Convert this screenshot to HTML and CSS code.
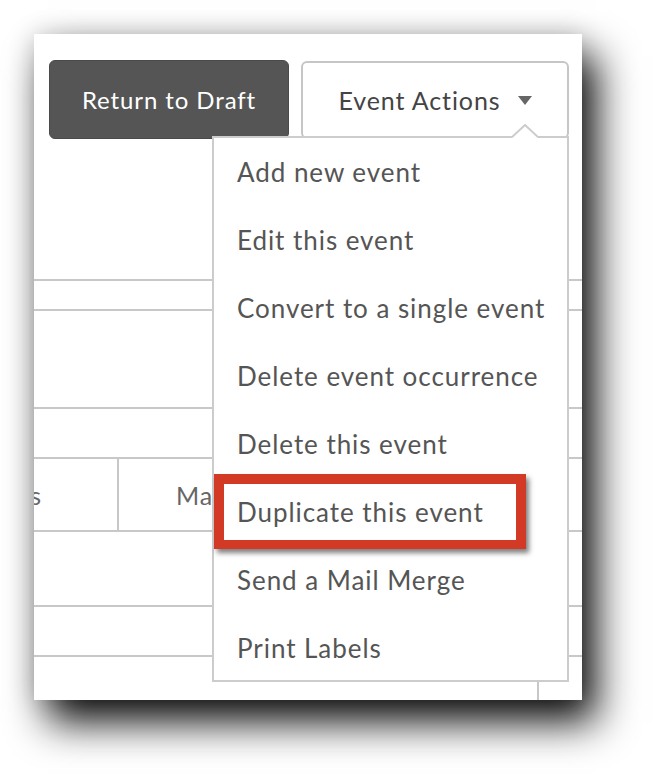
FILE: index.html
```html
<!DOCTYPE html>
<html lang="en">
<head>
<meta charset="utf-8">
<title>Event Actions</title>
<link rel="stylesheet" href="styles.css">
</head>
<body>
<div class="card">
  <div class="toolbar">
    <button class="btn btn-dark">Return to Draft</button>
    <button class="btn btn-light">Event Actions <span class="caret"></span></button>
  </div>
  <div class="row r1"></div>
  <div class="row r2"></div>
  <div class="row r3"></div>
  <div class="row r4">
    <div class="cell cell-a"><span>Occurrences</span></div>
    <div class="cell cell-b">Max Attendees</div>
  </div>
  <div class="row r5"></div>
  <div class="row r6"></div>
  <div class="row r7"><div class="cell cell-c"></div></div>

  <div class="menu">
    <svg class="notch" width="26" height="14" viewBox="0 0 26 14">
      <polygon points="0,14 13,1 26,14" fill="#fff"/>
      <polyline points="0,13 13,1 26,13" fill="none" stroke="#cccccc" stroke-width="2"/>
    </svg>
    <div class="item">Add new event</div>
    <div class="item">Edit this event</div>
    <div class="item">Convert to a single event</div>
    <div class="item">Delete event occurrence</div>
    <div class="item">Delete this event</div>
    <div class="item">Duplicate this event</div>
    <div class="item">Send a Mail Merge</div>
    <div class="item">Print Labels</div>
  </div>
  <div class="highlight"></div>
</div>
</body>
</html>
```
FILE: styles.css
```css
html, body {
  margin: 0;
  padding: 0;
  background: #ffffff;
}
body {
  font-family: Lato, "Liberation Sans", sans-serif;
  min-height: 774px;
  padding-top: 34px;
  padding-left: 34px;
  box-sizing: border-box;
}
.card {
  position: relative;
  width: 548px;
  height: 666px;
  background: #ffffff;
  overflow: hidden;
  box-shadow: 0 0 24px rgba(0,0,0,0.16), 14px 22px 38px rgba(0,0,0,0.95);
}
.toolbar {
  height: 245px;
  box-sizing: border-box;
  padding: 26px 0 0 15px;
  display: flex;
  align-items: flex-start;
  gap: 12px;
}
.btn {
  font-family: inherit;
  border-radius: 6px;
  box-sizing: border-box;
  display: flex;
  align-items: center;
  justify-content: center;
  padding: 0;
  margin: 0;
  letter-spacing: 0.9px;
}
.btn-dark {
  width: 240px;
  height: 79px;
  font-size: 24px;
  background: #555555;
  border: 1px solid #4a4a4a;
  color: #ffffff;
}
.btn-light {
  width: 268px;
  height: 78px;
  margin-top: 1px;
  font-size: 25px;
  background: #ffffff;
  border: 2px solid #c6c6c6;
  color: #444444;
}
.caret {
  width: 0;
  height: 0;
  margin-left: 17px;
  border-left: 7px solid transparent;
  border-right: 7px solid transparent;
  border-top: 9px solid #666666;
}
.row {
  border-top: 2px solid #c8c8c8;
  box-sizing: border-box;
  display: flex;
}
.r1 { height: 30px; }
.r2 { height: 98px; }
.r3 { height: 50px; }
.r4 { height: 73px; }
.r5 { height: 75px; }
.r6 { height: 50px; }
.r7 { height: 50px; }
.cell {
  display: flex;
  align-items: center;
  font-size: 25px;
  letter-spacing: 0.9px;
  color: #666666;
  white-space: nowrap;
  overflow: hidden;
}
.cell-a {
  width: 85px;
  flex: none;
  justify-content: flex-end;
  padding-right: 75px;
  box-sizing: border-box;
  border-right: 2px solid #c8c8c8;
}
.cell-b {
  padding-left: 57px;
}
.cell-c {
  width: 503px;
  flex: none;
  border-right: 2px solid #c8c8c8;
}
.menu {
  position: absolute;
  left: 178px;
  top: 102px;
  width: 357px;
  height: 546px;
  box-sizing: border-box;
  border: 2px solid #cccccc;
  background: #ffffff;
}
.notch {
  position: absolute;
  left: 298px;
  top: -14px;
  display: block;
}
.item {
  height: 68px;
  line-height: 68px;
  padding-left: 23px;
  font-size: 26px;
  letter-spacing: 0.95px;
  color: #555555;
  white-space: nowrap;
}
.highlight {
  position: absolute;
  left: 180px;
  top: 440px;
  width: 312px;
  height: 75px;
  box-sizing: border-box;
  border: 10px solid #d33a26;
  border-bottom-width: 9px;
  box-shadow: 3px 4px 5px rgba(0,0,0,0.5);
}
```
